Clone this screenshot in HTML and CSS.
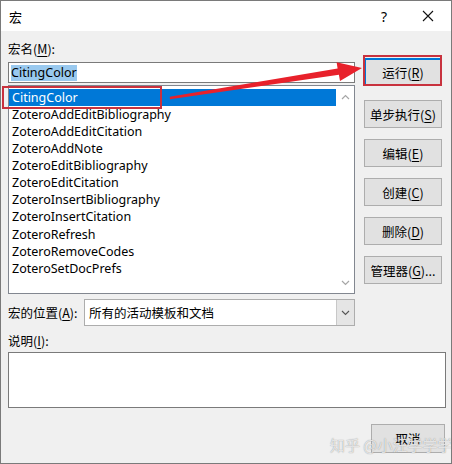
FILE: index.html
```html
<!DOCTYPE html>
<html lang="zh-CN">
<head>
<meta charset="utf-8">
<title>宏</title>
<link rel="stylesheet" href="styles.css">
</head>
<body>
<div class="window">
  <div class="titlebar">
    <span class="title">宏</span>
    <span class="help">?</span>
    <span class="close">
      <svg width="12" height="12" viewBox="0 0 12 12"><path d="M1 1 L11 11 M11 1 L1 11" stroke="#111" stroke-width="1.1" fill="none"/></svg>
    </span>
  </div>
  <div class="content">
    <div class="toprow">
      <div class="leftcol">
        <div class="label">宏名(<u>M</u>):</div>
        <div class="namebox"><span class="sel">CitingColor</span></div>
        <div class="list">
          <div class="items">
            <div class="item selected">CitingColor</div>
            <div class="item">ZoteroAddEditBibliography</div>
            <div class="item">ZoteroAddEditCitation</div>
            <div class="item">ZoteroAddNote</div>
            <div class="item">ZoteroEditBibliography</div>
            <div class="item">ZoteroEditCitation</div>
            <div class="item">ZoteroInsertBibliography</div>
            <div class="item">ZoteroInsertCitation</div>
            <div class="item">ZoteroRefresh</div>
            <div class="item">ZoteroRemoveCodes</div>
            <div class="item">ZoteroSetDocPrefs</div>
          </div>
          <div class="scrollbar">
            <svg width="9" height="6" viewBox="0 0 9 6"><path d="M1 5 L4.5 1.5 L8 5" stroke="#a6a6a6" stroke-width="1.2" fill="none"/></svg>
            <svg width="9" height="6" viewBox="0 0 9 6"><path d="M1 1 L4.5 4.5 L8 1" stroke="#a6a6a6" stroke-width="1.2" fill="none"/></svg>
          </div>
        </div>
      </div>
      <div class="buttons">
        <div class="btn default">运行(<u>R</u>)</div>
        <div class="btn">单步执行(<u>S</u>)</div>
        <div class="btn">编辑(<u>E</u>)</div>
        <div class="btn">创建(<u>C</u>)</div>
        <div class="btn">删除(<u>D</u>)</div>
        <div class="btn">管理器(<u>G</u>)...</div>
      </div>
    </div>
    <div class="locrow">
      <div class="loclabel">宏的位置(<u>A</u>):</div>
      <div class="combo">
        <span class="combotext">所有的活动模板和文档</span>
        <span class="dropbtn"><svg width="9" height="6" viewBox="0 0 9 6"><path d="M1 1 L4.5 4.5 L8 1" stroke="#555" stroke-width="1.1" fill="none"/></svg></span>
      </div>
    </div>
    <div class="label desc">说明(<u>I</u>):</div>
    <div class="textarea"></div>
    <div class="bottomrow">
      <div class="btn cancel">取消</div>
    </div>
  </div>

  <div class="redbox box1"></div>
  <div class="redbox box2"></div>
  <svg class="arrow" width="452" height="464" viewBox="0 0 452 464">
    <polygon fill="#e8212b" points="170,99.2 338.9,74.8 340,81 362,68 336.6,62.2 337.6,68.6 169.7,96.8"/>
  </svg>
  <div class="watermark">知乎 @小汪学学学</div>
</div>
</body>
</html>
```

FILE: styles.css
```css
html, body {
  margin: 0;
  padding: 0;
  background: #f0f0f0;
}
.window {
  position: relative;
  width: 452px;
  height: 464px;
  box-sizing: border-box;
  border: 1px solid #7a7a7a;
  background: #f0f0f0;
  font-family: "Noto Sans", "Noto Sans CJK SC", sans-serif;
  font-size: 12px;
  color: #000;
  overflow: hidden;
}
.titlebar {
  height: 30px;
  background: #fff;
  display: flex;
  align-items: center;
}
.title {
  font-family: "Noto Sans CJK SC", sans-serif;
  font-size: 13px;
  margin-left: 8px;
  flex: 1;
}
.help {
  font-family: "Noto Sans", sans-serif;
  font-size: 14px;
  width: 12px;
  margin-right: 29px;
}
.close {
  display: flex;
  margin-right: 17px;
}
.content {
  padding: 9px 6px 0 7px;
}
.toprow {
  display: flex;
  gap: 9px;
}
.leftcol {
  width: 347px;
}
.label {
  font-family: "Noto Sans CJK SC", sans-serif;
  font-size: 12.5px;
  line-height: 17px;
  height: 17px;
}
u {
  text-decoration-thickness: 1px;
  text-underline-offset: 2px;
}
.namebox {
  margin-top: 5px;
  height: 21px;
  box-sizing: border-box;
  border: 1px solid #7a7a7a;
  background: #fff;
  display: flex;
  align-items: center;
  padding-left: 2px;
}
.sel {
  background: #99c9ef;
  font-size: 12.5px;
  line-height: 16px;
}
.list {
  margin-top: 2px;
  height: 209px;
  box-sizing: border-box;
  border: 1px solid #828790;
  background: #fff;
  display: flex;
}
.items {
  flex: 1;
  padding-top: 2.5px;
}
.item {
  height: 17.15px;
  line-height: 17.15px;
  padding-left: 3px;
  font-size: 12.5px;
  white-space: nowrap;
}
.item.selected {
  background: #0078d7;
  color: #fff;
}
.scrollbar {
  width: 18px;
  background: #fff;
  display: flex;
  flex-direction: column;
  justify-content: space-between;
  align-items: center;
  padding: 8px 0 7px;
}
.buttons {
  display: flex;
  flex-direction: column;
  gap: 11px;
  padding-top: 18px;
}
.btn {
  width: 78px;
  height: 28px;
  box-sizing: border-box;
  border: 1px solid #adadad;
  background: #e1e1e1;
  display: flex;
  align-items: center;
  justify-content: center;
  font-family: "Noto Sans CJK SC", sans-serif;
  font-size: 12.5px;
}
.btn.default {
  border: 2px solid #0078d7;
  margin-bottom: 3px;
}
.locrow {
  display: flex;
  align-items: center;
  margin-top: 5px;
}
.loclabel {
  width: 76px;
  font-family: "Noto Sans CJK SC", sans-serif;
  font-size: 12.5px;
}
.combo {
  width: 271px;
  height: 27px;
  box-sizing: border-box;
  border: 1px solid #adadad;
  background: #fff;
  display: flex;
  align-items: stretch;
}
.combotext {
  flex: 1;
  display: flex;
  align-items: center;
  padding-left: 4px;
  font-family: "Noto Sans CJK SC", sans-serif;
  font-size: 12.5px;
}
.dropbtn {
  width: 17px;
  background: #e5e5e5;
  border-left: 1px solid #c8c8c8;
  display: flex;
  align-items: center;
  justify-content: center;
}
.desc {
  margin-top: 6px;
}
.textarea {
  margin-top: 3px;
  width: 438px;
  height: 56px;
  box-sizing: border-box;
  border: 1px solid #7a7a7a;
  background: #fff;
}
.bottomrow {
  display: flex;
  justify-content: flex-end;
  margin-top: 16px;
}
.btn.cancel {
  width: 74px;
  height: 29px;
}
.redbox {
  position: absolute;
  box-sizing: border-box;
  border: 2px solid #c8323e;
}
.box1 {
  left: 1px;
  top: 85px;
  width: 160px;
  height: 23px;
}
.box2 {
  left: 362px;
  top: 54px;
  width: 79px;
  height: 31px;
}
.arrow {
  position: absolute;
  left: -1px;
  top: -1px;
}
.watermark {
  position: absolute;
  left: 329px;
  top: 433px;
  font-family: "Noto Sans CJK SC", sans-serif;
  font-size: 15px;
  color: rgba(255, 255, 255, 0.75);
  text-shadow: 0 0 1px rgba(120, 120, 120, 0.9);
  white-space: nowrap;
}
```
